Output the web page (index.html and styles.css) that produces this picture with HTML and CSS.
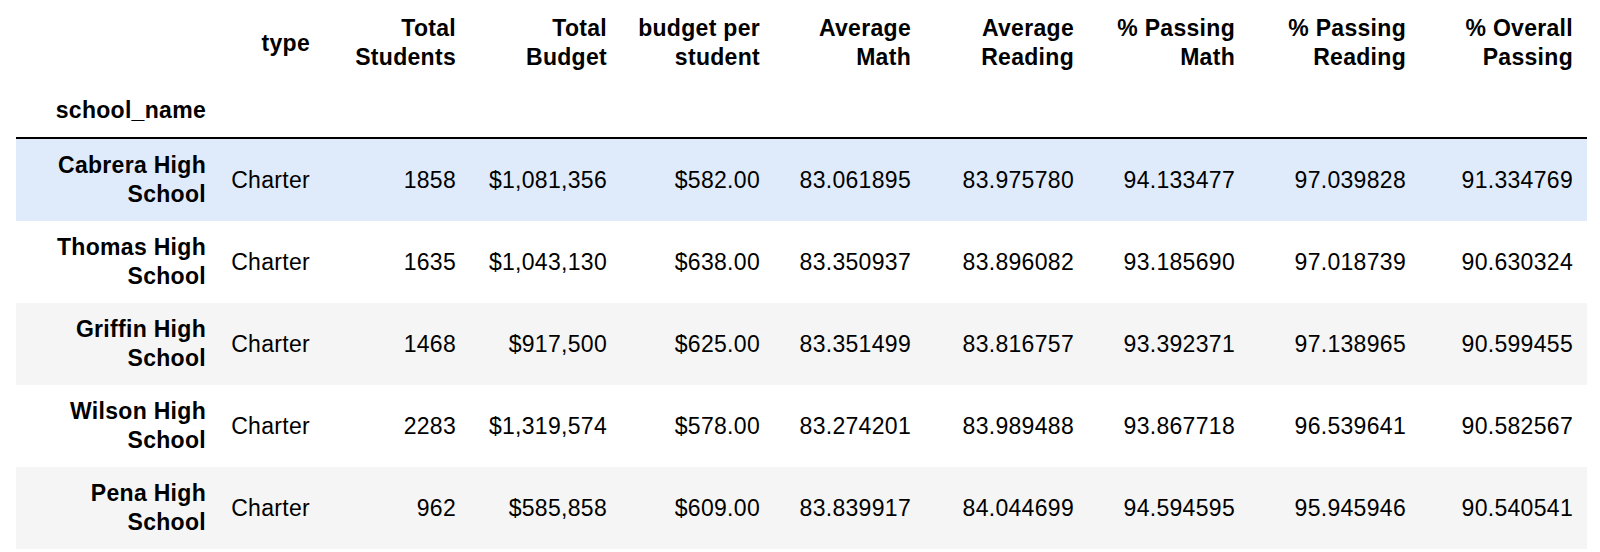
FILE: index.html
```html
<!DOCTYPE html>
<html>
<head>
<meta charset="utf-8">
<link rel="stylesheet" href="styles.css">
</head>
<body>
<div class="wrap">
<table class="df">
  <colgroup>
    <col class="c-idx"><col class="c-type"><col class="c-stu"><col class="c-bud"><col class="c-per">
    <col class="c-am"><col class="c-ar"><col class="c-pm"><col class="c-pr"><col class="c-op">
  </colgroup>
  <thead>
    <tr class="hdr1">
      <th></th>
      <th>type</th>
      <th>Total Students</th>
      <th>Total Budget</th>
      <th>budget per student</th>
      <th>Average Math</th>
      <th>Average Reading</th>
      <th>% Passing Math</th>
      <th>% Passing Reading</th>
      <th>% Overall Passing</th>
    </tr>
    <tr class="hdr2">
      <th>school_name</th>
      <th></th><th></th><th></th><th></th><th></th><th></th><th></th><th></th><th></th>
    </tr>
  </thead>
  <tbody>
    <tr class="hover">
      <th>Cabrera High School</th>
      <td>Charter</td><td>1858</td><td>$1,081,356</td><td>$582.00</td>
      <td>83.061895</td><td>83.975780</td><td>94.133477</td><td>97.039828</td><td>91.334769</td>
    </tr>
    <tr>
      <th>Thomas High School</th>
      <td>Charter</td><td>1635</td><td>$1,043,130</td><td>$638.00</td>
      <td>83.350937</td><td>83.896082</td><td>93.185690</td><td>97.018739</td><td>90.630324</td>
    </tr>
    <tr class="odd">
      <th>Griffin High School</th>
      <td>Charter</td><td>1468</td><td>$917,500</td><td>$625.00</td>
      <td>83.351499</td><td>83.816757</td><td>93.392371</td><td>97.138965</td><td>90.599455</td>
    </tr>
    <tr>
      <th>Wilson High School</th>
      <td>Charter</td><td>2283</td><td>$1,319,574</td><td>$578.00</td>
      <td>83.274201</td><td>83.989488</td><td>93.867718</td><td>96.539641</td><td>90.582567</td>
    </tr>
    <tr class="odd">
      <th>Pena High School</th>
      <td>Charter</td><td>962</td><td>$585,858</td><td>$609.00</td>
      <td>83.839917</td><td>84.044699</td><td>94.594595</td><td>95.945946</td><td>90.540541</td>
    </tr>
  </tbody>
</table>
</div>
</body>
</html>
```
FILE: styles.css
```css
html, body {
  margin: 0;
  padding: 0;
  background: #ffffff;
}
.wrap {
  padding: 2px 0 0 16px;
}
.df {
  border-collapse: collapse;
  table-layout: fixed;
  width: 1571px;
  font-family: "Liberation Sans", Arial, Helvetica, sans-serif;
  font-size: 23px;
  letter-spacing: 0.3px;
  line-height: 29px;
  color: #000000;
}
.c-idx { width: 204px; }
.c-type { width: 104px; }
.c-stu { width: 146px; }
.c-bud { width: 151px; }
.c-per { width: 153px; }
.c-am { width: 151px; }
.c-ar { width: 163px; }
.c-pm { width: 161px; }
.c-pr { width: 171px; }
.c-op { width: 167px; }
.df th,
.df td {
  text-align: right;
  vertical-align: middle;
  padding: 12px 14px 12px 8px;
  border: none;
}
.df th {
  font-weight: bold;
}
.df td {
  font-weight: normal;
}
.hdr1 th {
  height: 58px;
}
.hdr2 th {
  height: 29px;
  border-bottom: 2px solid #000000;
}
.df tbody tr {
  height: 82px;
}
.df tbody tr.odd {
  background: #f5f5f5;
}
.df tbody tr.hover {
  background: #dfebfb;
}
```
